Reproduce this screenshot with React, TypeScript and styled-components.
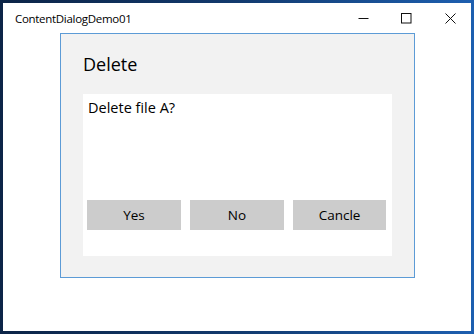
import React from "react";
import styled, { createGlobalStyle } from "styled-components";

const Global = createGlobalStyle`
  html, body { margin: 0; padding: 0; }
  body {
    width: 474px;
    height: 334px;
    overflow: hidden;
    background: linear-gradient(90deg, #0c2447 0%, #123a6e 50%, #1d5fb0 100%);
    font-family: "Open Sans", "Noto Sans", sans-serif;
  }
`;

const Frame = styled.div`
  box-sizing: border-box;
  width: 474px;
  height: 334px;
  padding: 3px 3px 3px 3px;
`;

const Window = styled.div`
  width: 468px;
  height: 328px;
  background: #ffffff;
  display: flex;
  flex-direction: column;
`;

const TitleBar = styled.div`
  height: 30px;
  display: flex;
  align-items: center;
  flex-shrink: 0;
`;

const TitleText = styled.div`
  flex: 1;
  padding-left: 12px;
  font-size: 11.5px;
  letter-spacing: -0.3px;
  color: #000;
  line-height: 16px;
  padding-top: 1px;
`;

const Controls = styled.div`
  display: flex;
  height: 30px;
  margin-right: -1px;
`;

const ControlButton = styled.div`
  width: 43.5px;
  height: 30px;
  display: flex;
  align-items: center;
  justify-content: center;
`;

const Content = styled.div`
  flex: 1;
  padding-left: 57px;
`;

const Dialog = styled.div`
  box-sizing: border-box;
  width: 355px;
  height: 245px;
  border: 1px solid #5c9bd6;
  background: #f2f2f2;
  padding: 16px 22px 21px 22px;
  display: flex;
  flex-direction: column;
`;

const DialogTitle = styled.div`
  font-size: 18px;
  line-height: 28px;
  color: #000;
  margin-bottom: 16px;
`;

const Body = styled.div`
  flex: 1;
  background: #ffffff;
  display: flex;
  flex-direction: column;
  padding: 4px 5px 26px 4px;
`;

const Message = styled.div`
  flex: 1;
  font-size: 14.5px;
  line-height: 20px;
  padding-left: 1px;
  color: #000;
`;

const ButtonRow = styled.div`
  display: grid;
  grid-template-columns: 94px 94px 93px;
  gap: 9px;
`;

const DialogButton = styled.div`
  height: 30px;
  background: #cccccc;
  display: flex;
  align-items: center;
  justify-content: center;
  font-size: 13.5px;
  color: #000;
`;

const Icon = ({ kind }: { kind: "min" | "max" | "close" }) => (
  <svg width="11" height="11" viewBox="0 0 11 11" fill="none" stroke="#111" strokeWidth="1">
    {kind === "min" && <line x1="0.5" y1="5.5" x2="10.5" y2="5.5" />}
    {kind === "max" && <rect x="0.5" y="0.5" width="9.5" height="9.5" />}
    {kind === "close" && (
      <>
        <line x1="0.5" y1="0.5" x2="10.5" y2="10.5" />
        <line x1="10.5" y1="0.5" x2="0.5" y2="10.5" />
      </>
    )}
  </svg>
);

export default function App() {
  return (
    <>
      <Global />
      <Frame>
        <Window>
          <TitleBar>
            <TitleText>ContentDialogDemo01</TitleText>
            <Controls>
              <ControlButton><Icon kind="min" /></ControlButton>
              <ControlButton><Icon kind="max" /></ControlButton>
              <ControlButton><Icon kind="close" /></ControlButton>
            </Controls>
          </TitleBar>
          <Content>
            <Dialog>
              <DialogTitle>Delete</DialogTitle>
              <Body>
                <Message>Delete file A?</Message>
                <ButtonRow>
                  <DialogButton>Yes</DialogButton>
                  <DialogButton>No</DialogButton>
                  <DialogButton>Cancle</DialogButton>
                </ButtonRow>
              </Body>
            </Dialog>
          </Content>
        </Window>
      </Frame>
    </>
  );
}
